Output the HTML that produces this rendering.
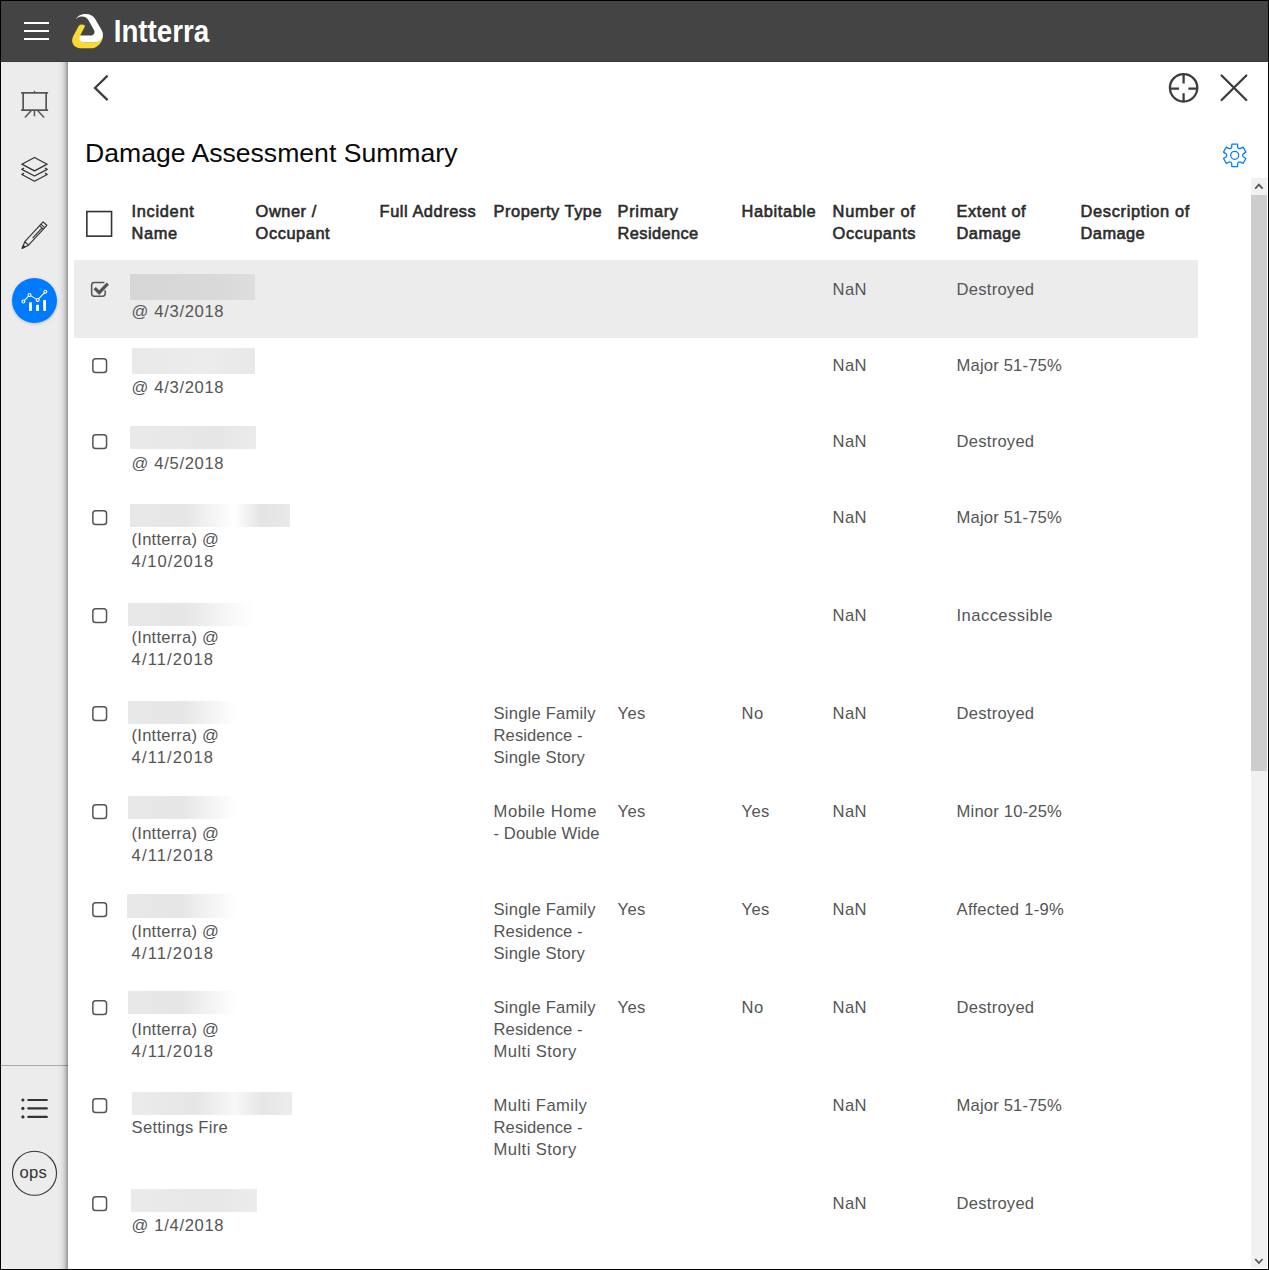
<!DOCTYPE html>
<html>
<head>
<meta charset="utf-8">
<title>Damage Assessment Summary</title>
<style>
html,body{margin:0;padding:0;}
body{width:1269px;height:1270px;position:relative;overflow:hidden;background:#fff;font-family:"Liberation Sans",sans-serif;}
.abs{position:absolute;}
#hdr{left:1px;top:1px;width:1267px;height:61px;background:#444444;border-bottom:0;}
#side{left:1px;top:62px;width:67px;height:1207px;background:#ececec;}
#sideshadow{left:56px;top:62px;width:12px;height:1207px;background:linear-gradient(to right,rgba(0,0,0,0) 0%,rgba(0,0,0,0.02) 33%,rgba(0,0,0,0.055) 50%,rgba(0,0,0,0.115) 66.6%,rgba(0,0,0,0.22) 83.3%,rgba(0,0,0,0.38) 100%);}
#panel{left:68px;top:62px;width:1199px;height:1207px;background:#fff;}
.bt{left:0;top:0;width:1269px;height:1px;background:#000;}
.bl{left:0;top:0;width:1px;height:1270px;background:#000;}
.br{left:1268px;top:0;width:1px;height:1270px;background:#000;}
.bb{left:0;top:1269px;width:1269px;height:1px;background:#000;}
svg{position:absolute;overflow:visible;}
.t{position:absolute;white-space:pre;font-size:16.6px;line-height:22px;color:#555;}
.h{position:absolute;white-space:pre;font-size:16.4px;line-height:22px;color:#2b2b2b;-webkit-text-stroke:0.6px #2b2b2b;}
#title{left:85px;top:138px;font-size:26.6px;line-height:30px;color:#0a0a0a;white-space:pre;}
</style>
</head>
<body>
<div class="abs" id="hdr"></div>
<div class="abs" style="left:1px;top:61px;width:1267px;height:1px;background:#3b3b3b"></div>
<div class="abs" id="side"></div>
<div class="abs" id="panel"></div>
<div class="abs" style="left:1px;top:1065px;width:67px;height:1px;background:#aaa"></div>
<div class="abs" id="sideshadow"></div>

<!-- hamburger -->
<div class="abs" style="left:24px;top:22px;width:25px;height:2px;background:#fff"></div>
<div class="abs" style="left:24px;top:30px;width:25px;height:2px;background:#fff"></div>
<div class="abs" style="left:24px;top:38px;width:25px;height:2px;background:#fff"></div>

<!-- logo -->
<svg style="left:66px;top:8px" width="44" height="44" viewBox="0 0 1269 1269">
<path fill="#fcd932" d="M440 478 C500 470 555 490 545 535 L410 790 C370 860 390 930 480 985 L900 985 C980 960 1030 880 1045 800 L1068 800 C1068 900 1000 1040 900 1100 C840 1150 780 1160 700 1160 L400 1160 C230 1140 150 1010 185 880 C195 840 210 810 225 780 L350 545 C370 510 400 485 440 478 Z"/>
<path fill="#ffffff" d="M285 322 C330 230 450 175 570 175 C700 175 790 230 850 330 L1030 640 C1075 720 1080 800 1030 880 C990 945 950 975 890 985 L480 985 C400 960 360 890 395 810 L410 795 L700 795 C790 795 850 720 810 640 L650 350 C600 270 520 240 440 245 C380 250 330 275 285 322 Z"/>
</svg>
<!-- Intterra wordmark -->
<svg style="left:0;top:0" width="260" height="61" viewBox="0 0 260 61"><text x="113.7" y="42.2" font-family="Liberation Sans, sans-serif" font-weight="bold" font-size="31.5" fill="#fff" textLength="95.6" lengthAdjust="spacingAndGlyphs">Intterra</text></svg>

<!-- sidebar icons -->
<svg style="left:0;top:61px" width="68" height="1209" viewBox="0 61 68 1209" fill="none" stroke-linecap="butt">
 <!-- easel -->
 <g stroke="#555" stroke-width="1.7">
  <path d="M21.1 92.9H48.1M21.1 110.1H48.1M23.15 92.9V110.1M46.15 92.9V110.1"/>
  <path d="M34.5 90.8V92.5" stroke-width="1.4"/>
  <path d="M31.3 110.6L24.9 117.4M34.45 110.6V116.2M37.6 110.6L44.1 117.4" stroke-width="1.5"/>
 </g>
 <!-- layers -->
 <g stroke="#333" stroke-width="1.3" stroke-linejoin="round" stroke-linecap="round">
  <path d="M34.5 157.5L47.2 164.2L34.5 170.8L21.8 164.2Z"/>
  <path d="M23.6 168.3L21.8 169.4L34.5 176L47.2 169.4L45.4 168.3"/>
  <path d="M23.6 173.4L21.8 174.5L34.5 181.2L47.2 174.5L45.4 173.4"/>
 </g>
 <!-- pencil -->
 <g stroke="#333" stroke-width="1.15" stroke-linejoin="round" transform="translate(22.2 248.3) rotate(-47.4)">
  <path d="M0 0L6.6 -2.55L33.6 -2.55L33.6 2.55L6.6 2.55Z"/>
  <path d="M6.6 -2.55V2.55M28.4 -2.55V2.55M30.4 -2.55V2.55M14.5 0.85H28.4"/>
  <path d="M0 0L2.8 -1.1L2.8 1.1Z" fill="#333"/>
 </g>
 <!-- list -->
 <g stroke="#333" stroke-width="2.2" stroke-linecap="round">
  <path d="M28.3 1100H46.8M28.3 1108.4H46.8M28.3 1116.9H46.8"/>
 </g>
 <g fill="#333" stroke="none"><circle cx="22.9" cy="1100" r="1.6"/><circle cx="22.9" cy="1108.4" r="1.6"/><circle cx="22.9" cy="1116.9" r="1.6"/></g>
 <!-- ops circle -->
 <circle cx="34.5" cy="1173.3" r="22" stroke="#333" stroke-width="1.1"/>
</svg>
<!-- active chart button -->
<div class="abs" style="left:12px;top:278px;width:45px;height:45px;border-radius:50%;background:#007bff;box-shadow:0 1px 3px rgba(0,0,0,0.2)"></div>
<svg style="left:0;top:268px" width="68" height="64" viewBox="0 268 68 64" fill="none">
 <g fill="#fff"><rect x="29.1" y="302.3" width="2.8" height="8.6"/><rect x="36.1" y="304.8" width="2.85" height="6.1"/><rect x="43.2" y="300" width="2.8" height="10.9"/></g>
 <g stroke="#fff" stroke-width="1.1">
  <path d="M24.5 300.4L28.5 296.1M31 295.9L36.3 299.1M38.8 298.7L44.3 292.8"/>
  <circle cx="23.4" cy="301.5" r="1.45"/><circle cx="29.5" cy="295" r="1.45"/><circle cx="37.7" cy="299.9" r="1.45"/><circle cx="45.35" cy="291.7" r="1.45"/>
 </g>
</svg>
<div class="t" style="left:19.6px;top:1162px;color:#333;letter-spacing:0.25px">ops</div>

<!-- panel header icons -->
<svg style="left:68px;top:61px" width="1200" height="120" viewBox="68 61 1200 120" fill="none">
 <path d="M107.6 75.6L95 87.9L107.6 100.1" stroke="#3c3c3c" stroke-width="2.2" stroke-linecap="butt"/>
 <g stroke="#3c3c3c" stroke-width="2.25">
  <circle cx="1183.6" cy="87.85" r="13.7"/>
  <path d="M1183.6 74V83.6M1183.6 93.2V101.6M1170 88.7H1179M1188.4 88.7H1197.3"/>
 </g>
 <path d="M1221.6 75.5L1246.3 100M1246.3 75.5L1221.6 100" stroke="#3c3c3c" stroke-width="2.3" stroke-linecap="round"/>
</svg>

<div class="abs" id="title">Damage Assessment Summary</div>

<svg style="left:1210px;top:130px" width="58" height="50" viewBox="1210 130 58 50" fill="none" stroke="#007bff" stroke-width="1.25" stroke-linejoin="round"><path d="M1231.70 147.20L1231.85 144.00L1237.55 144.00L1237.70 147.20Q1238.30 149.06 1240.21 148.65L1243.06 147.18L1245.91 152.12L1243.21 153.85Q1241.90 155.30 1243.21 156.75L1245.91 158.48L1243.06 163.42L1240.21 161.95Q1238.30 161.54 1237.70 163.40L1237.55 166.60L1231.85 166.60L1231.70 163.40Q1231.10 161.54 1229.19 161.95L1226.34 163.42L1223.49 158.48L1226.19 156.75Q1227.50 155.30 1226.19 153.85L1223.49 152.12L1226.34 147.18L1229.19 148.65Q1231.10 149.06 1231.70 147.20Z"/><circle cx="1234.7" cy="155.3" r="4.0"/></svg>
<div class="abs" style="left:74px;top:260px;width:1124px;height:78px;background:#ececec"></div>
<!-- header checkbox -->
<svg style="left:80px;top:204px" width="40" height="40" viewBox="80 204 40 40" fill="none" stroke="#333" stroke-width="1.6"><rect x="86.85" y="211.55" width="24.7" height="24.6"/></svg>
<!-- blobs -->
<div class="abs" style="left:130px;top:274px;width:125px;height:26px;background:linear-gradient(to right,#d6d6d6,#d9d9d9 70%,#dedede)"></div>
<div class="abs" style="left:132px;top:348px;width:123px;height:26px;background:linear-gradient(to right,#e9e9e9,#ececec 60%,#e8e8e8)"></div>
<div class="abs" style="left:130px;top:426px;width:126px;height:23px;background:linear-gradient(to right,#e9e9e9,#e6e6e6 70%,#ebebeb)"></div>
<div class="abs" style="left:130px;top:504px;width:160px;height:23px;background:linear-gradient(to right,#e8e8e8 0%,#e6e6e6 35%,#ffffff 65%,#e4e4e4 82%,#e9e9e9 100%)"></div>
<div class="abs" style="left:128px;top:603px;width:127px;height:23px;background:linear-gradient(to right,#e8e8e8 0%,#e6e6e6 45%,#fafafa 85%,#ffffff 100%)"></div>
<div class="abs" style="left:128px;top:701px;width:108px;height:23px;background:linear-gradient(to right,#e8e8e8 0%,#e6e6e6 50%,#ffffff 100%)"></div>
<div class="abs" style="left:128px;top:796px;width:108px;height:23px;background:linear-gradient(to right,#e8e8e8 0%,#e6e6e6 50%,#ffffff 100%)"></div>
<div class="abs" style="left:127px;top:894px;width:109px;height:24px;background:linear-gradient(to right,#e8e8e8 0%,#e6e6e6 50%,#ffffff 100%)"></div>
<div class="abs" style="left:128px;top:991px;width:108px;height:23px;background:linear-gradient(to right,#e8e8e8 0%,#e6e6e6 50%,#ffffff 100%)"></div>
<div class="abs" style="left:132px;top:1092px;width:160px;height:23px;background:linear-gradient(to right,#ebebeb 0%,#e6e6e6 40%,#f7f7f7 64%,#e6e6e6 82%,#ececec 100%)"></div>
<div class="abs" style="left:131px;top:1189px;width:126px;height:23px;background:linear-gradient(to right,#eaeaea,#e7e7e7 70%,#ececec)"></div>
<!-- checkboxes -->
<svg style="left:80px;top:260px" width="40" height="1010" viewBox="80 260 40 1010" fill="none" stroke="#555" stroke-width="1.5">
 <path d="M104.4 282.6H94.2Q91.65 282.6 91.65 285.2V293.6Q91.65 296.2 94.2 296.2H102.6Q105.2 296.2 105.2 293.6V290.2"/>
 <path d="M94.7 288.1L99.2 292.6L107.8 283.6" stroke-width="3.3" stroke-linejoin="miter"/>
 <rect x="92.85" y="358.75" width="13.7" height="13.7" rx="2.8"/>
 <rect x="92.85" y="434.75" width="13.7" height="13.7" rx="2.8"/>
 <rect x="92.85" y="510.75" width="13.7" height="13.7" rx="2.8"/>
 <rect x="92.85" y="608.75" width="13.7" height="13.7" rx="2.8"/>
 <rect x="92.85" y="706.75" width="13.7" height="13.7" rx="2.8"/>
 <rect x="92.85" y="804.75" width="13.7" height="13.7" rx="2.8"/>
 <rect x="92.85" y="902.75" width="13.7" height="13.7" rx="2.8"/>
 <rect x="92.85" y="1000.75" width="13.7" height="13.7" rx="2.8"/>
 <rect x="92.85" y="1098.75" width="13.7" height="13.7" rx="2.8"/>
 <rect x="92.85" y="1196.75" width="13.7" height="13.7" rx="2.8"/>
</svg>

<div class="h" style="left:131.6px;top:200px;letter-spacing:0.676px">Incident</div>
<div class="h" style="left:131.6px;top:222px;letter-spacing:0.634px">Name</div>
<div class="h" style="left:255.6px;top:200px;letter-spacing:0.553px">Owner /</div>
<div class="h" style="left:255.6px;top:222px;letter-spacing:0.552px">Occupant</div>
<div class="h" style="left:379.6px;top:200px;letter-spacing:0.548px">Full Address</div>
<div class="h" style="left:493.6px;top:200px;letter-spacing:0.525px">Property Type</div>
<div class="h" style="left:617.6px;top:200px;letter-spacing:0.668px">Primary</div>
<div class="h" style="left:617.6px;top:222px;letter-spacing:0.393px">Residence</div>
<div class="h" style="left:741.6px;top:200px;letter-spacing:0.611px">Habitable</div>
<div class="h" style="left:832.6px;top:200px;letter-spacing:0.707px">Number of</div>
<div class="h" style="left:832.6px;top:222px;letter-spacing:0.577px">Occupants</div>
<div class="h" style="left:956.6px;top:200px;letter-spacing:0.546px">Extent of</div>
<div class="h" style="left:956.6px;top:222px;letter-spacing:0.434px">Damage</div>
<div class="h" style="left:1080.6px;top:200px;letter-spacing:0.654px">Description of</div>
<div class="h" style="left:1080.6px;top:222px;letter-spacing:0.434px">Damage</div>
<div class="t" style="left:131.6px;top:301px;letter-spacing:0.660px">@ 4/3/2018</div>
<div class="t" style="left:832.6px;top:279px;letter-spacing:0.328px">NaN</div>
<div class="t" style="left:956.6px;top:279px;letter-spacing:0.234px">Destroyed</div>
<div class="t" style="left:131.6px;top:377px;letter-spacing:0.660px">@ 4/3/2018</div>
<div class="t" style="left:832.6px;top:355px;letter-spacing:0.328px">NaN</div>
<div class="t" style="left:956.6px;top:355px;letter-spacing:0.163px">Major 51-75%</div>
<div class="t" style="left:131.6px;top:453px;letter-spacing:0.660px">@ 4/5/2018</div>
<div class="t" style="left:832.6px;top:431px;letter-spacing:0.328px">NaN</div>
<div class="t" style="left:956.6px;top:431px;letter-spacing:0.234px">Destroyed</div>
<div class="t" style="left:131.6px;top:529px;letter-spacing:0.204px">(Intterra) @</div>
<div class="t" style="left:131.6px;top:551px;letter-spacing:0.968px">4/10/2018</div>
<div class="t" style="left:832.6px;top:507px;letter-spacing:0.328px">NaN</div>
<div class="t" style="left:956.6px;top:507px;letter-spacing:0.163px">Major 51-75%</div>
<div class="t" style="left:131.6px;top:627px;letter-spacing:0.204px">(Intterra) @</div>
<div class="t" style="left:131.6px;top:649px;letter-spacing:1.105px">4/11/2018</div>
<div class="t" style="left:832.6px;top:605px;letter-spacing:0.328px">NaN</div>
<div class="t" style="left:956.6px;top:605px;letter-spacing:0.418px">Inaccessible</div>
<div class="t" style="left:131.6px;top:725px;letter-spacing:0.204px">(Intterra) @</div>
<div class="t" style="left:131.6px;top:747px;letter-spacing:1.105px">4/11/2018</div>
<div class="t" style="left:493.6px;top:703px;letter-spacing:0.192px">Single Family</div>
<div class="t" style="left:493.6px;top:725px;letter-spacing:0.038px">Residence -</div>
<div class="t" style="left:493.6px;top:747px;letter-spacing:0.166px">Single Story</div>
<div class="t" style="left:617.6px;top:703px;letter-spacing:0.313px">Yes</div>
<div class="t" style="left:741.6px;top:703px;letter-spacing:0.523px">No</div>
<div class="t" style="left:832.6px;top:703px;letter-spacing:0.328px">NaN</div>
<div class="t" style="left:956.6px;top:703px;letter-spacing:0.234px">Destroyed</div>
<div class="t" style="left:131.6px;top:823px;letter-spacing:0.204px">(Intterra) @</div>
<div class="t" style="left:131.6px;top:845px;letter-spacing:1.105px">4/11/2018</div>
<div class="t" style="left:493.6px;top:801px;letter-spacing:0.508px">Mobile Home</div>
<div class="t" style="left:493.6px;top:823px;letter-spacing:0.062px">- Double Wide</div>
<div class="t" style="left:617.6px;top:801px;letter-spacing:0.313px">Yes</div>
<div class="t" style="left:741.6px;top:801px;letter-spacing:0.313px">Yes</div>
<div class="t" style="left:832.6px;top:801px;letter-spacing:0.328px">NaN</div>
<div class="t" style="left:956.6px;top:801px;letter-spacing:0.180px">Minor 10-25%</div>
<div class="t" style="left:131.6px;top:921px;letter-spacing:0.204px">(Intterra) @</div>
<div class="t" style="left:131.6px;top:943px;letter-spacing:1.105px">4/11/2018</div>
<div class="t" style="left:493.6px;top:899px;letter-spacing:0.192px">Single Family</div>
<div class="t" style="left:493.6px;top:921px;letter-spacing:0.038px">Residence -</div>
<div class="t" style="left:493.6px;top:943px;letter-spacing:0.166px">Single Story</div>
<div class="t" style="left:617.6px;top:899px;letter-spacing:0.313px">Yes</div>
<div class="t" style="left:741.6px;top:899px;letter-spacing:0.313px">Yes</div>
<div class="t" style="left:832.6px;top:899px;letter-spacing:0.328px">NaN</div>
<div class="t" style="left:956.6px;top:899px;letter-spacing:0.264px">Affected 1-9%</div>
<div class="t" style="left:131.6px;top:1019px;letter-spacing:0.204px">(Intterra) @</div>
<div class="t" style="left:131.6px;top:1041px;letter-spacing:1.105px">4/11/2018</div>
<div class="t" style="left:493.6px;top:997px;letter-spacing:0.192px">Single Family</div>
<div class="t" style="left:493.6px;top:1019px;letter-spacing:0.038px">Residence -</div>
<div class="t" style="left:493.6px;top:1041px;letter-spacing:0.424px">Multi Story</div>
<div class="t" style="left:617.6px;top:997px;letter-spacing:0.313px">Yes</div>
<div class="t" style="left:741.6px;top:997px;letter-spacing:0.523px">No</div>
<div class="t" style="left:832.6px;top:997px;letter-spacing:0.328px">NaN</div>
<div class="t" style="left:956.6px;top:997px;letter-spacing:0.234px">Destroyed</div>
<div class="t" style="left:131.6px;top:1117px;letter-spacing:0.245px">Settings Fire</div>
<div class="t" style="left:493.6px;top:1095px;letter-spacing:0.430px">Multi Family</div>
<div class="t" style="left:493.6px;top:1117px;letter-spacing:0.038px">Residence -</div>
<div class="t" style="left:493.6px;top:1139px;letter-spacing:0.424px">Multi Story</div>
<div class="t" style="left:832.6px;top:1095px;letter-spacing:0.328px">NaN</div>
<div class="t" style="left:956.6px;top:1095px;letter-spacing:0.163px">Major 51-75%</div>
<div class="t" style="left:131.6px;top:1215px;letter-spacing:0.660px">@ 1/4/2018</div>
<div class="t" style="left:832.6px;top:1193px;letter-spacing:0.328px">NaN</div>
<div class="t" style="left:956.6px;top:1193px;letter-spacing:0.234px">Destroyed</div>
<div class="abs" style="left:1251px;top:178px;width:16px;height:1090px;background:#f1f1f1"></div>
<div class="abs" style="left:1251px;top:195px;width:16px;height:576px;background:#cdcdcd"></div>
<svg style="left:1251px;top:178px" width="16" height="1090" viewBox="1251 178 16 1090" fill="none" stroke="#555" stroke-width="1.75"><path d="M1255.2 188.6L1258.9 184.6L1262.6 188.6"/><path d="M1255.2 1259L1258.9 1263L1262.6 1259"/></svg>


<div class="abs bt"></div><div class="abs bl"></div><div class="abs br"></div><div class="abs bb"></div>
</body>
</html>
